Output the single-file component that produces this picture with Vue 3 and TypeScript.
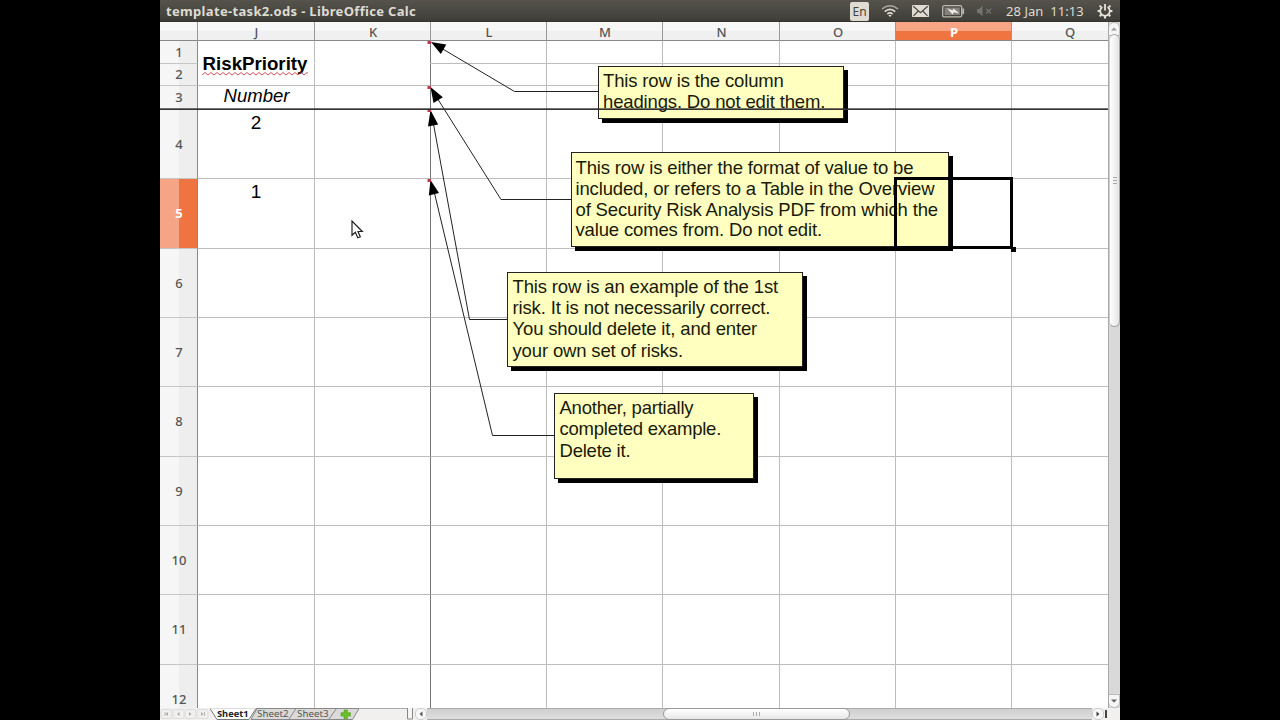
<script setup lang="ts">
interface Column { label: string; active?: boolean }
interface Row { label: string; active?: boolean; cells: Record<string, { text: string; kind: string }> }
interface Note { id: string; lines: string[] }

const columns: Column[] = [
  { label: 'J' }, { label: 'K' }, { label: 'L' }, { label: 'M' },
  { label: 'N' }, { label: 'O' }, { label: 'P', active: true }, { label: 'Q' },
]

const rows: Row[] = [
  { label: '1', cells: { J: { text: 'RiskPriority', kind: 'heading' } } },
  { label: '2', cells: {} },
  { label: '3', cells: { J: { text: 'Number', kind: 'format' } } },
  { label: '4', cells: { J: { text: '2', kind: 'value' } } },
  { label: '5', active: true, cells: { J: { text: '1', kind: 'value' } } },
  { label: '6', cells: {} },
  { label: '7', cells: {} },
  { label: '8', cells: {} },
  { label: '9', cells: {} },
  { label: '10', cells: {} },
  { label: '11', cells: {} },
  { label: '12', cells: {} },
]

const notes: Note[] = [
  { id: 'note-columns', lines: ['This row is the column', 'headings. Do not edit them.'] },
  { id: 'note-format', lines: [
    'This row is either the format of value to be',
    'included, or refers to a Table in the Overview',
    'of Security Risk Analysis PDF from which the',
    'value comes from. Do not edit.',
  ] },
  { id: 'note-example', lines: [
    'This row is an example of the 1st',
    'risk. It is not necessarily correct.',
    'You should delete it, and enter',
    'your own set of risks.',
  ] },
  { id: 'note-partial', lines: ['Another, partially', 'completed example.', 'Delete it.'] },
]

const squiggle = 'M0 3' + Array.from({ length: 18 }, (_, i) => ` L${i * 6 + 3} 0.5 L${i * 6 + 6} 3`).join('')
</script>

<template>
  <div class="stage">
    <div class="desktop">
      <header class="panel">
        <span class="title">template-task2.ods - LibreOffice Calc</span>
        <div class="indicators">
          <span class="lang">En</span>
          <svg class="wifi" width="18" height="14" viewBox="0 0 18 14" fill="none" stroke="#dfdbd2">
            <path d="M1 5 Q9 -1.6 17 5" stroke="#aaa79f" stroke-width="1.5" />
            <path d="M3.7 7.6 Q9 3 14.3 7.6" stroke-width="1.6" />
            <path d="M6.2 10 Q9 7.6 11.8 10" stroke-width="1.6" />
            <path d="M7.3 11.2 L9 13 L10.7 11.2 Q9 10.2 7.3 11.2Z" fill="#dfdbd2" stroke="none" />
          </svg>
          <svg class="mail" width="17" height="12" viewBox="0 0 17 12">
            <rect width="17" height="12" rx="0.8" fill="#dfdbd2" />
            <path d="M1.2 1.2 L8.5 7.6 L15.8 1.2 M1.5 10.8 L6.2 6 M15.5 10.8 L10.8 6" fill="none" stroke="#4a4842" stroke-width="1.2" />
          </svg>
          <svg class="battery" width="23" height="13" viewBox="0 0 23 13">
            <rect x="0.7" y="0.7" width="19" height="11.2" rx="1.5" fill="none" stroke="#bbb8b0" stroke-width="1.3" />
            <rect x="2.6" y="2.6" width="15.2" height="7.4" fill="#85827b" />
            <path d="M20.3 3.5 h1.8 v5.6 h-1.8z" fill="#bbb8b0" />
            <path d="M5 3.2 L10.6 5.6 L11.4 3.6 L17.5 8.6 L11.8 7.2 L10.6 9.6z" fill="#f0eee7" />
          </svg>
          <svg class="sound" width="17" height="12" viewBox="0 0 17 12">
            <path d="M1 4 h2 L6.5 0.8 V11.2 L3 8 H1z" fill="#777570" />
            <path d="M10.2 3.7 L15 8.6 M15 3.7 L10.2 8.6" stroke="#777570" stroke-width="1.3" />
          </svg>
          <span class="clock">28 Jan&nbsp; 11:13</span>
          <svg class="gear" width="16" height="16" viewBox="-8 -8 16 16" fill="none" stroke="#e6e3da">
            <path d="M-2.6 -4 A4.8 4.8 0 1 0 2.6 -4" stroke-width="1.7" />
            <path d="M0 -7 V-0.5" stroke-width="1.8" />
            <path d="M3.9 -3.9 L5.4 -5.4 M5 0 H7.4 M3.7 3.7 L5.3 5.3 M0 5 V7.4 M-3.7 3.7 L-5.3 5.3 M-5 0 H-7.4 M-3.9 -3.9 L-5.4 -5.4" stroke-width="2" />
          </svg>
        </div>
      </header>

      <main class="workspace">
        <div class="sheet">
          <div class="corner"></div>
          <div v-for="c in columns" :key="c.label" class="col-head" :class="{ active: c.active }">{{ c.label }}</div>
          <template v-for="r in rows" :key="r.label">
            <div class="row-head" :class="{ active: r.active }">{{ r.label }}</div>
            <div v-for="c in columns" :key="c.label" class="cell" :class="['r' + r.label, 'c' + c.label]">
              <span v-if="r.cells[c.label]" :class="r.cells[c.label].kind">
                {{ r.cells[c.label].text }}
                <svg v-if="r.cells[c.label].kind === 'heading'" class="squiggle" width="106" height="4" viewBox="0 0 106 4">
                  <path :d="squiggle" fill="none" stroke="#d0404c" stroke-width="0.9" />
                </svg>
              </span>
            </div>
          </template>

          <svg class="connectors" width="948" height="686" viewBox="160 22 948 686">
            <g fill="none" stroke="#222" stroke-width="1">
              <path d="M598 91.5 H514.5 L436 45" />
              <path d="M571 199.5 H501 L434 93" />
              <path d="M507 319.5 H469.5 L432 116" />
              <path d="M554 435.5 H492.5 L433 187" />
            </g>
            <g fill="#000">
              <path d="M431 42 L446.3 44.5 L440.8 54z" />
              <path d="M430.5 87 L442.8 97.2 L433.5 103z" />
              <path d="M430.5 110 L438.2 124.6 L428 126.4z" />
              <path d="M430.5 180 L439 193 L428.8 195.4z" />
            </g>
            <g fill="#c0364a">
              <rect x="427.5" y="41" width="3.5" height="3" />
              <rect x="427.5" y="86" width="3.5" height="3" />
              <rect x="427.5" y="109" width="3.5" height="3" />
              <rect x="427.5" y="179" width="3.5" height="3" />
            </g>
          </svg>

          <aside v-for="n in notes" :key="n.id" class="note" :class="n.id">
            <div v-for="l in n.lines" :key="l" class="line">{{ l }}</div>
          </aside>

          <div class="freeze"></div>
          <div class="cursor-cell"></div>
          <svg class="pointer" width="13" height="20" viewBox="0 0 13 20">
            <path d="M1 1 V15.3 L4.3 12.3 L6.8 17.8 L9.3 16.7 L7 11.5 H11.3z" fill="#fff" stroke="#222" stroke-width="1.2" />
          </svg>
        </div>

        <div class="vbar">
          <div class="vbtn up"><svg width="6" height="4" viewBox="0 0 6 4"><path d="M0 3.5 L3 0.5 L6 3.5z" fill="#999" /></svg></div>
          <div class="vtrack">
            <div class="vthumb"><i></i><i></i><i></i></div>
          </div>
          <div class="vbtn down"><svg width="6" height="4" viewBox="0 0 6 4"><path d="M0 0.5 H6 L3 3.8z" fill="#666" /></svg></div>
        </div>
      </main>

      <footer class="bottom">
        <div class="nav">
          <svg width="50" height="12" viewBox="0 0 50 12">
            <g fill="none" stroke="#dddbd9"><rect x="1" y="1.5" width="11" height="9" rx="2" /><rect x="13" y="1.5" width="11" height="9" rx="2" /><rect x="25" y="1.5" width="11" height="9" rx="2" /><rect x="37" y="1.5" width="11" height="9" rx="2" /></g>
            <path d="M5 4v4 M44.5 4v4" stroke="#b5b5b5" />
            <path d="M8 4 L5.5 6 L8 8z M19.5 4 L17 6 L19.5 8z M29 4 L31.5 6 L29 8z M41 4 L43.5 6 L41 8z" fill="#aaa" />
          </svg>
        </div>
        <svg class="tabshapes" width="205" height="12" viewBox="210 708 205 12">
          <path d="M246 708.5 H299" stroke="#999" />
          <path d="M251 719.5 L257 708.5 H359 L352.5 719.5z" fill="#dbdad8" stroke="#888" />
          <path d="M210 708.5 L217 719.5 H249 L256 708.5z" fill="#fff" stroke="#777" />
          <path d="M210 708 H256" stroke="#fff" stroke-width="1.5" />
          <path d="M289 719 L296 708.5 M329 719 L336.5 708.5" stroke="#888" fill="none" />
          <path d="M359 708.5 H408" stroke="#aaa" />
          <path d="M344 710 h3.4 v2.7 h3 v3.4 h-3 v2.7 h-3.4 v-2.7 h-3 v-3.4 h3z" fill="#6cbd2b" stroke="#4d9a1d" stroke-width="0.6" />
          <path d="M407.5 708 V719 H412.5 V708" fill="#f5f5f5" stroke="#888" />
        </svg>
        <div class="tabs"><b>Sheet1</b><span>Sheet2</span><span>Sheet3</span></div>
        <div class="hbar">
          <div class="hbtn"><svg width="4" height="6" viewBox="0 0 4 6"><path d="M3.5 0.5 V5.5 L0.5 3z" fill="#555" /></svg></div>
          <div class="htrack"><div class="hthumb"><i></i><i></i><i></i></div></div>
          <div class="hbtn"><svg width="4" height="6" viewBox="0 0 4 6"><path d="M0.5 0.5 V5.5 L3.5 3z" fill="#444" /></svg></div>
        </div>
        <i class="grip"></i>
      </footer>
    </div>
  </div>
</template>

<style>
html, body { margin: 0; background: #000; }
</style>

<style scoped>
* { box-sizing: border-box; }
.stage { width: 1280px; height: 720px; background: #000; overflow: hidden; display: flex; justify-content: center; font-family: "Noto Sans", "Open Sans", sans-serif; }
.desktop { width: 960px; height: 720px; background: #fff; display: flex; flex-direction: column; overflow: hidden; }
.panel { height: 22px; flex: none; display: flex; align-items: center; justify-content: space-between; background: linear-gradient(#55534c, #403f39 90%, #33322d); color: #dfdbd2; padding: 0 7px 0 6px; }
.title { font-weight: 700; font-size: 13px; line-height: 22px; letter-spacing: 0.33px; white-space: nowrap; }
.indicators { display: flex; align-items: center; }
.lang { width: 19px; height: 19px; border-radius: 2px; background: #dfdbd2; color: #45433d; font-size: 12px; line-height: 19px; text-align: center; }
.wifi { margin-left: 12px; }
.mail { margin-left: 13px; }
.battery { margin-left: 13px; }
.sound { margin-left: 11px; }
.clock { margin-left: 13px; font-size: 13px; line-height: 22px; width: 80px; letter-spacing: 0.05px; white-space: nowrap; }
.gear { margin-left: 11px; }

.workspace { height: 686px; flex: none; display: flex; }
.sheet { position: relative; width: 948px; height: 686px; overflow: hidden; display: grid; grid-template-columns: 38px 117px 116px 116px 116px 117px 116px 116px 96px; grid-template-rows: 19px 23px 22px 24px 69px 70px 69px 69px 70px 69px 69px 70px 70px; }
.corner, .col-head { border-right: 1px solid #999; border-bottom: 1px solid #888; background: linear-gradient(#f8f7f7 50%, #f1f0f0 50%); }
.col-head { color: #555; font-size: 13px; font-weight: 500; line-height: 20px; text-align: center; padding-left: 1px; }
.col-head:nth-child(9) { border-right: 0; padding-left: 20px; }
.col-head.active { background: linear-gradient(#f7a585 50%, #f07440 50%); color: #fff; font-weight: 700; }
.row-head { display: flex; align-items: center; justify-content: center; border-right: 1px solid #888; border-bottom: 1px solid #c6c6c6; background: linear-gradient(90deg, #f7f6f6 50%, #efeeee 50%); color: #555; font-size: 13px; font-weight: 500; padding: 0 0 1px 1px; }
.row-head.active { background: linear-gradient(90deg, #f5a586 50%, #ef7441 50%); color: #fff; font-weight: 700; }
.cell { border-right: 1px solid #bdbdbd; border-bottom: 1px solid #bdbdbd; font-family: "Liberation Sans", Arial, sans-serif; font-size: 19px; color: #000; text-align: center; min-width: 0; }
.cell.cQ { border-right: 0; }
.cell.cK { border-right-color: #777; }
.cell.r1.cJ, .cell.r1.cK { border-bottom-color: transparent; }
.cell span { display: block; white-space: nowrap; }
.cell .heading { position: relative; font-weight: 700; line-height: 22px; padding-top: 12px; margin-right: 2px; font-size: 18.7px; }
.squiggle { position: absolute; left: 4px; top: 31px; }
.cell .format { font-style: italic; line-height: 20px; font-size: 18.5px; padding-left: 1px; }
.cell .value { line-height: 22px; padding-top: 2px; }
.connectors { position: absolute; left: 0; top: 0; }

.note { position: absolute; background: #ffffc0; border: 1px solid #222; box-shadow: 4px 4px 0 #000; color: #1a1a08; font-family: "Liberation Sans", Arial, sans-serif; font-size: 18.5px; line-height: 21px; letter-spacing: -0.15px; padding: 4px 0 0 4px; }
.line { white-space: nowrap; }
.note-columns { left: 438px; top: 44px; width: 246px; height: 53px; padding-top: 3px; }
.note-format { left: 410.5px; top: 130px; width: 378px; height: 95px; padding-top: 5px; line-height: 20.8px; }
.note-example { left: 347px; top: 250px; width: 296px; height: 95px; padding: 3px 0 0 4.5px; line-height: 21.2px; }
.note-partial { left: 394px; top: 371px; width: 200px; height: 86px; padding: 3px 0 0 4.5px; line-height: 21.4px; letter-spacing: -0.22px; }
.freeze { position: absolute; left: 0; right: 0; top: 86px; height: 2px; background: linear-gradient(rgba(40, 40, 40, 0.65) 50%, #333 50%); }
.cursor-cell { position: absolute; left: 734px; top: 155px; width: 119px; height: 72px; border: 3px solid #000; }
.cursor-cell::after { content: ""; position: absolute; right: -6px; bottom: -6px; width: 5px; height: 5px; background: #000; }
.pointer { position: absolute; left: 191px; top: 198px; }

.vbar { width: 12px; height: 686px; display: flex; flex-direction: column; border-left: 1px solid #aaa; background: #d9d9d9; }
.vbtn { height: 14px; flex: none; display: flex; align-items: center; justify-content: center; background: #f5f5f5; border: 1px solid #bbb; border-left: 0; border-radius: 6px 6px 0 0; }
.vbtn.down { border-radius: 0 0 6px 6px; }
.vtrack { flex: 1; }
.vthumb { height: 293px; margin-top: -2px; border: 1px solid #a5a5a5; border-left-color: #ccc; border-radius: 6px; background: linear-gradient(90deg, #fff, #e4e4e4); display: flex; flex-direction: column; align-items: center; justify-content: center; gap: 2px; }
.vthumb i { width: 4px; height: 1px; background: #aaa; }

.bottom { height: 12px; flex: none; display: flex; position: relative; background: #f1f0ef; }
.nav { width: 50px; height: 12px; }
.nav svg, .tabshapes { display: block; flex: none; }
.tabs { position: absolute; left: 57px; top: 0; height: 12px; display: flex; font-size: 9.8px; line-height: 12px; color: #555; white-space: nowrap; }
.tabs b { width: 40px; font-size: 9.3px; color: #222; }
.tabs span { width: 40px; }
.hbar { width: 689px; height: 12px; display: flex; }
.hbtn { width: 12px; display: flex; align-items: center; justify-content: center; background: #f7f7f7; border: 1px solid #ccc; border-radius: 5px; flex: none; }
.htrack { flex: 1; background: linear-gradient(#cfcfcf, #dedede); border-top: 1px solid #aaa; border-bottom: 1px solid #aaa; padding-left: 236px; }
.hthumb { width: 187px; height: 12px; margin-top: -1px; border: 1px solid #999; border-radius: 6px; background: linear-gradient(#fff, #e6e6e6); display: flex; align-items: center; justify-content: center; gap: 2px; }
.hthumb i { width: 1px; height: 4px; background: #aaa; }
.grip { width: 2px; height: 8px; margin: 2px 0 0 1px; background: #444; }
</style>
